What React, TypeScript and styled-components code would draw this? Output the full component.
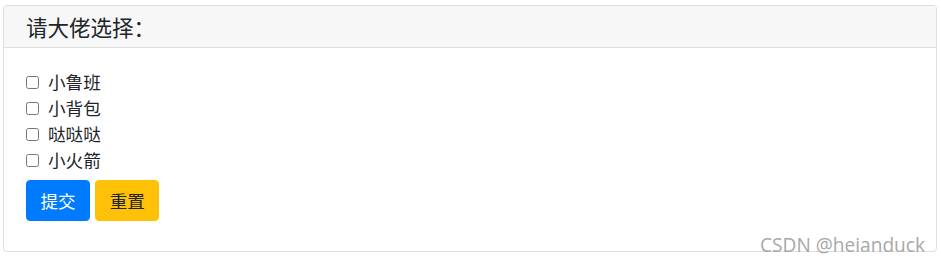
import React from "react";
import styled, { createGlobalStyle } from "styled-components";

const Global = createGlobalStyle`
  html, body { margin: 0; padding: 0; background: #fff; }
  body {
    font-family: "Noto Sans CJK SC", "Noto Sans", sans-serif;
    color: #212529;
    font-size: 17.6px;
  }
`;

const Page = styled.div`
  position: relative;
  padding: 5px 4px 0 3px;
  height: 260px;
  box-sizing: border-box;
`;

const Card = styled.div`
  border: 1px solid #dfdfdf;
  border-radius: 4px;
  background: #fff;
  height: 247px;
  box-sizing: border-box;
  display: flex;
  flex-direction: column;
  overflow: hidden;
`;

const Header = styled.div`
  background: #f7f7f7;
  border-bottom: 1px solid #dfdfdf;
  height: 42px;
  box-sizing: border-box;
  padding: 0 22px;
  display: flex;
  align-items: center;
  font-size: 21.5px;
  color: #212529;
`;

const Body = styled.div`
  padding: 21px 22px 0 22px;
  display: flex;
  flex-direction: column;
`;

const Option = styled.label`
  display: flex;
  align-items: center;
  height: 26px;
  line-height: 26px;
  font-size: 17.6px;
  color: #212529;
`;

const Box = styled.input`
  width: 13px;
  height: 13px;
  margin: 0 9px 0 0;
`;

const Actions = styled.div`
  display: flex;
  gap: 5px;
  margin-top: 7px;
`;

const Button = styled.button<{ $variant: "primary" | "warning" }>`
  font-family: "Noto Sans CJK SC", "Noto Sans", sans-serif;
  font-size: 17.6px;
  line-height: 26px;
  height: 41px;
  padding: 0 13.5px;
  border-radius: 4px;
  border: 1px solid ${(p) => (p.$variant === "primary" ? "#007bff" : "#ffc107")};
  background: ${(p) => (p.$variant === "primary" ? "#007bff" : "#ffc107")};
  color: ${(p) => (p.$variant === "primary" ? "#fff" : "#212529")};
`;

const Watermark = styled.div`
  position: absolute;
  right: 16px;
  bottom: 4px;
  font-family: "Open Sans", "Noto Sans", sans-serif;
  font-size: 19.1px;
  color: #a8a8a8;
  line-height: 22px;
`;

const options = ["小鲁班", "小背包", "哒哒哒", "小火箭"];

export default function App() {
  return (
    <>
      <Global />
      <Page>
        <Card>
          <Header>请大佬选择：</Header>
          <Body>
            {options.map((o) => (
              <Option key={o}>
                <Box type="checkbox" />
                {o}
              </Option>
            ))}
            <Actions>
              <Button $variant="primary">提交</Button>
              <Button $variant="warning">重置</Button>
            </Actions>
          </Body>
        </Card>
        <Watermark>CSDN @heianduck</Watermark>
      </Page>
    </>
  );
}
